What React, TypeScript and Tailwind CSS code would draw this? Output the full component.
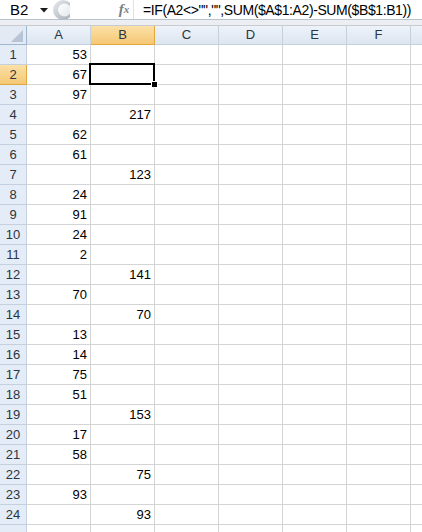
import React from "react";

const colA: Record<number, string> = {
  1: "53", 2: "67", 3: "97", 5: "62", 6: "61", 8: "24", 9: "91", 10: "24", 11: "2",
  13: "70", 15: "13", 16: "14", 17: "75", 18: "51", 20: "17", 21: "58", 23: "93",
};
const colB: Record<number, string> = {
  4: "217", 7: "123", 12: "141", 14: "70", 19: "153", 22: "75", 24: "93",
};

const cols = ["A", "B", "C", "D", "E", "F", "G"];
const rows = Array.from({ length: 25 }, (_, i) => i + 1);

export default function App() {
  return (
    <div
      className="w-[422px] h-[532px] overflow-hidden bg-white text-black"
      style={{ fontFamily: '"Liberation Sans", Arial, sans-serif' }}
    >
      {/* Formula bar */}
      <div className="flex h-[20px] items-center bg-white border-b border-[#b9c3cf]">
        <div className="flex w-[52px] h-full items-center pl-[10px] text-[15px] leading-none">
          <span>B2</span>
          <svg width="8" height="5" viewBox="0 0 8 5" className="ml-[12px] mt-[1px]">
            <path d="M0 0 H8 L4 4.5 Z" fill="#1a1a1a" />
          </svg>
        </div>
        <div className="relative w-[18px] h-full">
          <svg width="18" height="20" viewBox="0 0 18 20" className="absolute top-0 left-0">
            <defs>
              <linearGradient id="gr" x1="0" y1="0" x2="1" y2="1">
                <stop offset="0" stopColor="#e8ebef" />
                <stop offset="1" stopColor="#a3aab4" />
              </linearGradient>
              <linearGradient id="gi" x1="0" y1="0" x2="1" y2="1">
                <stop offset="0" stopColor="#ffffff" />
                <stop offset="1" stopColor="#e2e6eb" />
              </linearGradient>
            </defs>
            <circle cx="11" cy="10" r="10" fill="url(#gr)" />
            <circle cx="12.5" cy="10" r="6.5" fill="url(#gi)" />
          </svg>
        </div>
        <div className="flex-1 h-full bg-white" />
        <div
          className="w-[16px] flex items-center justify-center text-[#7a7f86] italic text-[15px] leading-none"
          style={{ fontFamily: '"Liberation Serif", serif' }}
        >
          <span className="font-bold">f</span>
          <span className="text-[11px] font-bold">x</span>
        </div>
        <div className="ml-[1px] w-[1px] h-full bg-[#dfe3e8]" />
        <div className="w-[288px] pl-[9px] text-[14px] tracking-[-0.4px] whitespace-nowrap leading-none">
          =IF(A2&lt;&gt;"","",SUM($A$1:A2)-SUM($B$1:B1))
        </div>
      </div>
      <div className="h-[6px] bg-[#eceef1] border-b border-[#c8ccd2]" />

      {/* Grid */}
      <div className="grid grid-cols-[27px_repeat(7,64px)]">
        <div className="relative h-[19px] bg-[#e3eaf4] border-r border-b border-[#9eb6ce]">
          <svg width="12" height="12" viewBox="0 0 12 12" className="absolute right-[3px] bottom-[2px]">
            <path d="M12 0 V12 H0 Z" fill="#b6c4d6" />
          </svg>
        </div>
        {cols.map((c) => (
          <div
            key={c}
            className={
              c === "B"
                ? "h-[19px] flex items-center justify-center text-[13px] text-[#2c3440] border-r border-b border-[#e0a93f] bg-gradient-to-b from-[#fbe0a6] to-[#f5c874]"
                : "h-[19px] flex items-center justify-center text-[13px] text-[#2c3440] border-r border-b border-[#c5d0de] bg-gradient-to-b from-[#eef3fa] to-[#dce5f1]"
            }
          >
            {c === "G" ? null : c}
          </div>
        ))}

        {rows.map((r) => (
          <React.Fragment key={r}>
            <div
              className={
                r === 2
                  ? "h-[20px] flex items-center justify-center text-[13px] text-[#2c3440] border-r border-b border-[#e0a93f] bg-gradient-to-b from-[#fbe0a6] to-[#f5c874]"
                  : "h-[20px] flex items-center justify-center text-[13px] text-[#2c3440] border-r border-b border-[#c5d0de] bg-[#e4ecf7]"
              }
            >
              {r < 25 ? r : null}
            </div>
            {cols.map((c) => (
              <div
                key={c}
                className="relative h-[20px] flex items-center justify-end pr-[3px] pt-[1px] text-[13px] border-r border-b border-[#d4d4d4]"
              >
                {c === "A" ? colA[r] : c === "B" ? colB[r] : null}
                {c === "B" && r === 2 && (
                  <>
                    <div className="absolute z-10 left-[-2px] top-[-2px] w-[66px] h-[22px] border-2 border-black" />
                    <div className="absolute z-20 left-[60px] top-[16px] w-[7px] h-[7px] bg-black border border-white" />
                  </>
                )}
              </div>
            ))}
          </React.Fragment>
        ))}
      </div>
    </div>
  );
}
